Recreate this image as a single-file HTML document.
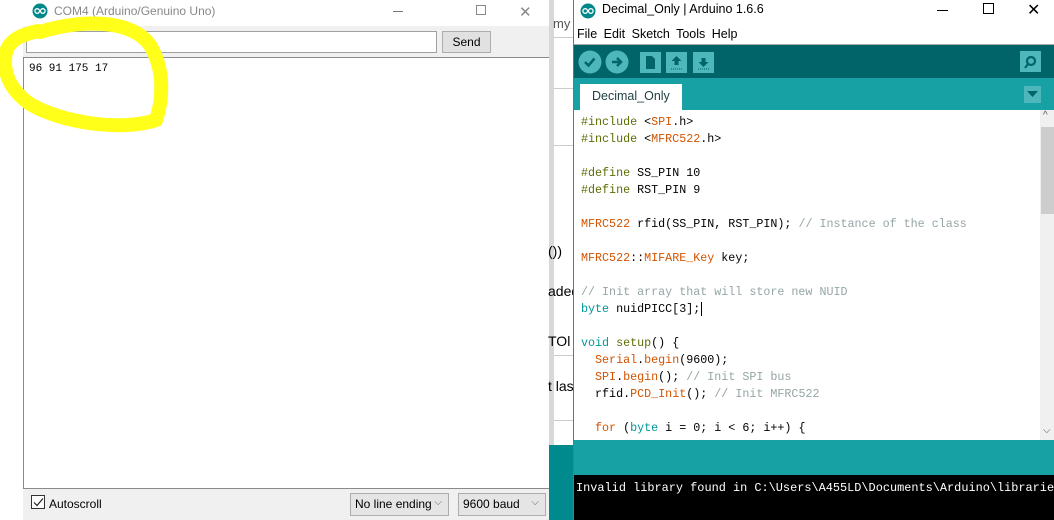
<!DOCTYPE html>
<html><head><meta charset="utf-8"><style>
*{margin:0;padding:0;box-sizing:border-box}
body{width:1054px;height:520px;overflow:hidden;position:relative;background:#fff;font-family:"Liberation Sans",sans-serif}
.a{position:absolute}
.ui{font-family:"Liberation Sans",sans-serif;font-size:12px;color:#000}
.code{font-family:"Liberation Mono",monospace;font-size:11.7px;line-height:17px;color:#000;white-space:pre}
.inc{color:#5e6d03}.or{color:#d35400}.cm{color:#95a5a6}.kw{color:#00979c}
</style></head><body>
<div class="a" style="left:0;top:0;width:549px;height:520px;background:#fff"></div>
<svg class="a" style="left:32px;top:3px" width="16" height="16" viewBox="0 0 16 16"><circle cx="8" cy="8" r="7.5" fill="#00878a"/><circle cx="5.2" cy="8" r="2.3" fill="none" stroke="#fff" stroke-width="1.3"/><circle cx="10.8" cy="8" r="2.3" fill="none" stroke="#fff" stroke-width="1.3"/></svg>
<div class="a ui" style="left:54px;top:4px;color:#888;font-size:12px">COM4 (Arduino/Genuino Uno)</div>
<div class="a" style="left:393px;top:11px;width:10px;height:1px;background:#777"></div>
<div class="a" style="left:476px;top:5px;width:10px;height:10px;border:1px solid #888"></div>
<div class="a" style="left:519px;top:3px;font-size:15px;color:#888">✕</div>
<div class="a" style="left:23px;top:26px;width:526px;height:494px;background:#f0f0f0"></div>
<div class="a" style="left:26px;top:31px;width:411px;height:22px;background:#fff;border:1px solid #a0a0a0"></div>
<div class="a ui" style="left:442px;top:31px;width:49px;height:22px;background:#e1e1e1;border:1px solid #adadad;text-align:center;line-height:20px">Send</div>
<div class="a" style="left:23px;top:57px;width:526px;height:432px;background:#fff;border:1px solid #8a8a8a;border-right:none"></div>
<div class="a" style="left:29px;top:63px;font-family:'Liberation Mono',monospace;font-size:11px;color:#000">96 91 175 17</div>
<div class="a" style="left:31px;top:495px;width:14px;height:14px;border:1px solid #333;background:#fff"></div>
<svg class="a" style="left:33px;top:497px" width="11" height="11"><path d="M1 5.5 L4 8.5 L10 1.5" fill="none" stroke="#222" stroke-width="1.2"/></svg>
<div class="a ui" style="left:49px;top:497px">Autoscroll</div>
<div class="a ui" style="left:350px;top:493px;width:99px;height:23px;background:#e5e5e5;border:1px solid #adadad;padding:3px 4px">No line ending<span style="position:absolute;right:6px;top:3px;color:#666;font-size:10px">⌵</span></div>
<div class="a ui" style="left:458px;top:493px;width:88px;height:23px;background:#e5e5e5;border:1px solid #adadad;padding:3px 4px">9600 baud<span style="position:absolute;right:6px;top:3px;color:#666;font-size:10px">⌵</span></div>
<svg class="a" style="left:0;top:0" width="200" height="140"><path d="M40 32 C80 20 130 18 150 45 C166 72 162 102 156 120 C120 132 60 122 30 104 C10 90 2 72 6 52 C10 38 25 34 38 31" fill="none" stroke="#ffff1a" stroke-width="14" stroke-linecap="round"/></svg>
<div class="a" style="left:549px;top:0;width:24px;height:520px;background:#fff"></div>
<div class="a" style="left:549px;top:0;width:5px;height:520px;background:#d8d8d8"></div>
<div class="a ui" style="left:553px;top:16px;color:#555;font-size:13px">my</div>
<div class="a" style="left:554px;top:37px;width:19px;height:1px;background:#ccc"></div>
<div class="a" style="left:554px;top:88px;width:19px;height:1px;background:#ccc"></div>
<div class="a" style="left:554px;top:145px;width:19px;height:1px;background:#ccc"></div>
<div class="a ui" style="left:548px;top:243px;font-size:14px">())</div>
<div class="a ui" style="left:548px;top:283px;font-size:14px">aded</div>
<div class="a ui" style="left:548px;top:333px;font-size:14px">TOl</div>
<div class="a" style="left:554px;top:355px;width:19px;height:1px;background:#ccc"></div>
<div class="a ui" style="left:548px;top:378px;font-size:14px">t las</div>
<div class="a" style="left:554px;top:420px;width:19px;height:1px;background:#ccc"></div>
<div class="a" style="left:549px;top:445px;width:24px;height:75px;background:#008a8d"></div>
<div class="a" style="left:573px;top:0;width:481px;height:520px;background:#fff;border-left:1px solid #3c7fc0"></div>
<svg class="a" style="left:580px;top:3px" width="16" height="16" viewBox="0 0 16 16"><circle cx="8" cy="8" r="7.5" fill="#00878a"/><circle cx="5.2" cy="8" r="2.3" fill="none" stroke="#fff" stroke-width="1.3"/><circle cx="10.8" cy="8" r="2.3" fill="none" stroke="#fff" stroke-width="1.3"/></svg>
<div class="a ui" style="left:602px;top:2px;font-size:12.5px">Decimal_Only | Arduino 1.6.6</div>
<div class="a" style="left:937px;top:10px;width:11px;height:1px;background:#000"></div>
<div class="a" style="left:983px;top:3px;width:11px;height:11px;border:1px solid #000"></div>
<div class="a" style="left:1027px;top:0px;font-size:16px">✕</div>
<div class="a ui" style="left:577px;top:27px;font-size:12.5px;word-spacing:3px">File Edit Sketch Tools Help</div>
<div class="a" style="left:574px;top:44px;width:480px;height:1px;background:#aaa"></div>
<div class="a" style="left:574px;top:45px;width:480px;height:33px;background:#006468"></div>
<svg class="a" style="left:574px;top:45px" width="480" height="33">
<circle cx="16" cy="17" r="11.5" fill="#4db7bb"/><path d="M11 17 l3.5 3.5 l6-7" fill="none" stroke="#006468" stroke-width="2.5"/>
<circle cx="43" cy="17" r="11.5" fill="#4db7bb"/><path d="M38 17 h9 M43 13 l4 4 l-4 4" fill="none" stroke="#006468" stroke-width="2.5"/>
<rect x="66" y="7" width="21" height="21" fill="#4db7bb"/><path d="M72 11 h6 l3 3 v10 h-9z" fill="#006468"/>
<rect x="92" y="7" width="21" height="21" fill="#4db7bb"/><path d="M102.5 11 l5 5 h-3 v4 h-4 v-4 h-3z" fill="#006468"/><path d="M97 24 h11" stroke="#006468" stroke-dasharray="1 1"/>
<rect x="119" y="7" width="21" height="21" fill="#4db7bb"/><path d="M129.5 22 l5-5 h-3 v-4 h-4 v4 h-3z" fill="#006468"/><path d="M124 24 h11" stroke="#006468" stroke-dasharray="1 1"/>
<rect x="446" y="6" width="21" height="21" fill="#4db7bb"/><circle cx="457" cy="16" r="4" fill="none" stroke="#006468" stroke-width="2.2"/><path d="M454 19 l-3 4" stroke="#006468" stroke-width="2.2"/>
</svg>
<div class="a" style="left:574px;top:78px;width:480px;height:32px;background:#17a1a5"></div>
<div class="a" style="left:580px;top:84px;width:102px;height:26px;background:#fff"></div>
<div class="a ui" style="left:592px;top:89px;font-size:12.5px;color:#1f3f3f">Decimal_Only</div>
<div class="a" style="left:1024px;top:86px;width:17px;height:17px;background:#4db7bb"></div>
<svg class="a" style="left:1027px;top:91px" width="11" height="7"><path d="M0 0 h11 l-5.5 6z" fill="#006468"/></svg>
<div class="a" style="left:1040px;top:110px;width:14px;height:330px;background:#f0f0f0"></div>
<div class="a" style="left:1041px;top:127px;width:13px;height:87px;background:#cdcdcd"></div>
<div class="a" style="left:1043px;top:110px;font-size:10px;color:#555">^</div>
<div class="a" style="left:1043px;top:425px;font-size:10px;color:#555">⌵</div>
<div class="a code" style="left:581px;top:114px"><span class="inc">#include</span> &lt;<span class="or">SPI</span>.h&gt;
<span class="inc">#include</span> &lt;<span class="or">MFRC522</span>.h&gt;

<span class="inc">#define</span> SS_PIN 10
<span class="inc">#define</span> RST_PIN 9

<span class="or">MFRC522</span> rfid(SS_PIN, RST_PIN); <span class="cm">// Instance of the class</span>

<span class="or">MFRC522</span>::<span class="or">MIFARE_Key</span> key;

<span class="cm">// Init array that will store new NUID</span>
<span class="kw">byte</span> nuidPICC[3];<span style="border-left:1.5px solid #000;margin-left:1px"></span>

<span class="kw">void</span> <span class="inc">setup</span>() {
  <span class="or">Serial</span>.<span class="or">begin</span>(9600);
  <span class="or">SPI</span>.<span class="or">begin</span>(); <span class="cm">// Init SPI bus</span>
  rfid.<span class="or">PCD_Init</span>(); <span class="cm">// Init MFRC522</span>

  <span class="or">for</span> (<span class="kw">byte</span> i = 0; i &lt; 6; i++) {</div>
<div class="a" style="left:574px;top:440px;width:480px;height:35px;background:#17a1a5"></div>
<div class="a" style="left:574px;top:475px;width:480px;height:45px;background:#000"></div>
<div class="a code" style="left:576px;top:480px;color:#fff;font-size:11.9px">Invalid library found in C:\Users\A455LD\Documents\Arduino\libraries'</div>
</body></html>
